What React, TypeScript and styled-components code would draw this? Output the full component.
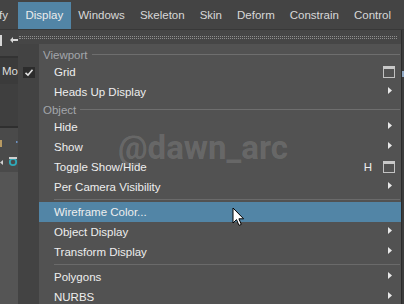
import React from "react";
import styled, {createGlobalStyle} from "styled-components";

type Entry =
  | {kind: "header"; label: string}
  | {kind: "sep"}
  | {
      kind: "item";
      label: string;
      checked?: boolean;
      sub?: boolean;
      box?: boolean;
      hotkey?: string;
      active?: boolean;
    };

const menus = ["Display", "Windows", "Skeleton", "Skin", "Deform", "Constrain", "Control"];

const entries: Entry[] = [
  {kind: "header", label: "Viewport"},
  {kind: "item", label: "Grid", checked: true, box: true},
  {kind: "item", label: "Heads Up Display", sub: true},
  {kind: "header", label: "Object"},
  {kind: "item", label: "Hide", sub: true},
  {kind: "item", label: "Show", sub: true},
  {kind: "item", label: "Toggle Show/Hide", hotkey: "H", box: true},
  {kind: "item", label: "Per Camera Visibility", sub: true},
  {kind: "sep"},
  {kind: "item", label: "Wireframe Color...", active: true},
  {kind: "item", label: "Object Display", sub: true},
  {kind: "item", label: "Transform Display", sub: true},
  {kind: "sep"},
  {kind: "item", label: "Polygons", sub: true},
  {kind: "item", label: "NURBS", sub: true},
];

const GlobalStyle = createGlobalStyle`
  html, body {
    margin: 0;
    padding: 0;
    background: #444444;
  }
  body {
    font-family: "Liberation Sans", Arial, sans-serif;
  }
`;

const Screen = styled.div`
  position: relative;
  width: 404px;
  height: 304px;
  overflow: hidden;
  display: flex;
  flex-direction: column;
  background: #444444;
  font-family: "Liberation Sans", Arial, sans-serif;
  font-size: 11.5px;
`;

const MenuBar = styled.div`
  display: flex;
  flex-shrink: 0;
  height: 30px;
  padding-top: 2px;
  box-sizing: border-box;
  border-bottom: 1px solid #383838;
  background: #444444;
`;

const MenuTitle = styled.div<{$active?: boolean}>`
  padding: 0 7.5px;
  line-height: 27px;
  white-space: nowrap;
  color: ${p => (p.$active ? "#ececec" : "#d8d8d8")};
  background: ${p => (p.$active ? "#5285a6" : "transparent")};
`;

const ClippedTitle = styled.div`
  width: 18px;
  flex-shrink: 0;
  overflow: hidden;
  display: flex;
  justify-content: flex-end;
  line-height: 27px;
  color: #d8d8d8;
  white-space: nowrap;

  span {
    padding-right: 10px;
  }
`;

const Workspace = styled.div`
  flex: 1;
  display: flex;
  min-height: 0;
`;

const SidePanel = styled.div`
  width: 18px;
  flex-shrink: 0;
  display: flex;
  flex-direction: column;
  overflow: hidden;
`;

const SideBlock = styled.div<{$h: number; $bg: string}>`
  height: ${p => p.$h}px;
  flex-shrink: 0;
  background: ${p => p.$bg};
  display: flex;
  align-items: flex-start;
  overflow: hidden;
`;

const SideFill = styled.div`
  flex: 1;
  background: #555555;
`;

const WhiteNub = styled.div`
  width: 2px;
  height: 11px;
  margin-top: 5px;
  background: #d6d6d6;
`;

const SideText = styled.div`
  padding-left: 2px;
  line-height: 26px;
  color: #dddddd;
  white-space: nowrap;
`;

const Popup = styled.div`
  width: 383px;
  flex-shrink: 0;
  display: flex;
  flex-direction: column;
  background: #525252;
  border-right: 1px solid #2c2c2c;
  overflow: hidden;
`;

const TearOff = styled.div`
  height: 14px;
  flex-shrink: 0;
  display: flex;
  align-items: center;
  padding: 0 4px 0 1px;
  background: #464646;
`;

const Dots = styled.div`
  flex: 1;
  height: 1px;
  border-top: 1px dotted #8e8e8e;
  border-bottom: 1px dotted #8e8e8e;
`;

const MenuBody = styled.div`
  display: flex;
  flex-direction: column;
  padding-top: 3px;
  background: linear-gradient(90deg, #434343 0 21px, #525252 21px);
`;

const Row = styled.div<{$h: number}>`
  display: flex;
  height: ${p => p.$h}px;
  flex-shrink: 0;
`;

const Gutter = styled.div`
  width: 21px;
  flex-shrink: 0;
  display: flex;
  align-items: center;
  justify-content: center;
  background: #434343;
`;

const CheckBox = styled.div`
  width: 12px;
  height: 11px;
  background: #2c2c2c;
  display: flex;
  align-items: center;
  justify-content: center;
`;

const HeaderMain = styled.div`
  flex: 1;
  display: flex;
  align-items: center;
  padding: 0 1px 0 4px;
  color: #a3a6ab;
`;

const HeaderLine = styled.div`
  flex: 1;
  height: 1px;
  margin-left: 4px;
  background: #6e6e6e;
`;

const SepMain = styled.div`
  flex: 1;
  display: flex;
  align-items: center;
  padding: 0 1px 0 15px;
`;

const SepLine = styled.div`
  flex: 1;
  height: 1px;
  background: #6a6a6a;
`;

const ItemMain = styled.div<{$active?: boolean}>`
  flex: 1;
  display: flex;
  align-items: center;
  padding: 0 6px 0 15px;
  color: #eeeeee;
  background: ${p => (p.$active ? "#5285a6" : "transparent")};
`;

const Label = styled.span`
  flex: 1;
  white-space: nowrap;
`;

const Hotkey = styled.span`
  margin-right: 11px;
  color: #eeeeee;
`;

const IconSlot = styled.div`
  width: 12px;
  height: 12px;
  display: flex;
`;

const RightStrip = styled.div`
  flex: 1;
  display: flex;
  flex-direction: column;
  background: #3c3c3c;
`;

const StripMark = styled.div`
  height: 6px;
  margin-top: 41px;
  background: #8ea6c2;
`;

const Watermark = styled.div`
  position: absolute;
  left: 118px;
  top: 131px;
  font-family: Roboto, "Liberation Sans", sans-serif;
  font-weight: 700;
  font-size: 33px;
  line-height: 33px;
  color: rgba(255, 255, 255, 0.14);
  pointer-events: none;
  white-space: nowrap;
`;

const Cursor = styled.svg`
  position: absolute;
  left: 232px;
  top: 207px;
  pointer-events: none;
`;

const SubArrow = () => (
  <svg width="12" height="12" viewBox="0 0 12 12">
    <polygon points="5,1 9,4.5 5,8" fill="#e8e8e8" />
  </svg>
);

const OptionBox = () => (
  <svg width="12" height="12" viewBox="0 0 12 12">
    <rect x="0.5" y="0.5" width="11" height="11" fill="none" stroke="#c2c2c2" />
    <rect x="0" y="0" width="12" height="3" fill="#c8c8c8" />
  </svg>
);

const Check = () => (
  <svg width="10" height="9" viewBox="0 0 10 9">
    <polyline points="1.5,4.8 4,7 8.5,1.8" fill="none" stroke="#e2e2e2" strokeWidth="1.6" />
  </svg>
);

const BackArrow = () => (
  <svg width="8" height="6" viewBox="0 0 8 6" style={{marginTop: 7, marginLeft: 8}}>
    <polygon points="0,3 3,0 3,2 8,2 8,4 3,4 3,6" fill="#d8d8d8" />
  </svg>
);

const ToolIcons = () => (
  <svg width="18" height="44" viewBox="0 0 18 44">
    <rect x="0" y="12" width="2" height="7" fill="#b89a62" />
    <rect x="16" y="13" width="1.5" height="2" fill="#6c8fc0" />
    <polygon points="3,32 0,34.5 3,37" fill="#d0d0d0" />
    <circle cx="13" cy="34" r="3.2" fill="none" stroke="#2fa8b8" strokeWidth="1.8" />
    <rect x="9" y="29" width="8" height="2" fill="#cfcfcf" />
  </svg>
);

const MenuRow: React.FC<{entry: Entry}> = ({entry}) => {
  if (entry.kind === "header") {
    return (
      <Row $h={15}>
        <Gutter />
        <HeaderMain>
          {entry.label}
          <HeaderLine />
        </HeaderMain>
      </Row>
    );
  }
  if (entry.kind === "sep") {
    return (
      <Row $h={5}>
        <Gutter />
        <SepMain>
          <SepLine />
        </SepMain>
      </Row>
    );
  }
  return (
    <Row $h={20}>
      <Gutter>
        {entry.checked && (
          <CheckBox>
            <Check />
          </CheckBox>
        )}
      </Gutter>
      <ItemMain $active={entry.active}>
        <Label>{entry.label}</Label>
        {entry.hotkey && <Hotkey>{entry.hotkey}</Hotkey>}
        <IconSlot>
          {entry.sub && <SubArrow />}
          {entry.box && <OptionBox />}
        </IconSlot>
      </ItemMain>
    </Row>
  );
};

export default function App() {
  return (
    <>
      <GlobalStyle />
      <Screen>
        <MenuBar>
          <ClippedTitle>
            <span>Modify</span>
          </ClippedTitle>
          {menus.map(m => (
            <MenuTitle key={m} $active={m === "Display"}>
              {m}
            </MenuTitle>
          ))}
        </MenuBar>
        <Workspace>
          <SidePanel>
            <SideBlock $h={26} $bg="#444444">
              <WhiteNub />
              <BackArrow />
            </SideBlock>
            <SideBlock $h={2} $bg="#333333" />
            <SideBlock $h={26} $bg="#3b3b3b">
              <SideText>Mo</SideText>
            </SideBlock>
            <SideBlock $h={42} $bg="#3f3f3f" />
            <SideBlock $h={2} $bg="#2f2f2f" />
            <SideBlock $h={44} $bg="#4a4a4a">
              <ToolIcons />
            </SideBlock>
            <SideFill />
          </SidePanel>
          <Popup>
            <TearOff>
              <Dots />
            </TearOff>
            <MenuBody>
              {entries.map((e, i) => (
                <MenuRow key={i} entry={e} />
              ))}
            </MenuBody>
          </Popup>
          <RightStrip>
            <StripMark />
          </RightStrip>
        </Workspace>
        <Watermark>@dawn_arc</Watermark>
        <Cursor width="13" height="20" viewBox="0 0 13 20">
          <path
            d="M1 1 L1 16 L4.5 12.6 L7 18.4 L9.3 17.4 L6.9 11.8 L11.6 11.8 Z"
            fill="#ffffff"
            stroke="#000000"
            strokeWidth="1"
            strokeLinejoin="miter"
          />
        </Cursor>
      </Screen>
    </>
  );
}
